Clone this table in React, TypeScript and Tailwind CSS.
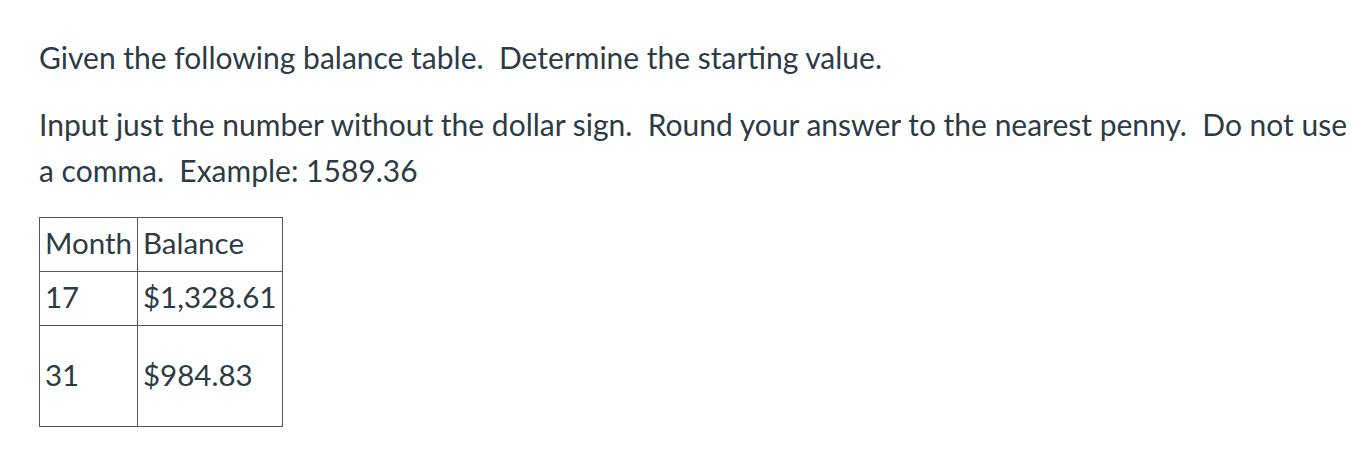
export default function App() {
  const font = { fontFamily: 'Lato, "Noto Sans", sans-serif' };
  return (
    <div className="w-[1356px] h-[455px] bg-white text-[#2d3b45] pl-[39px] pt-[34px]" style={font}>
      <p className="text-[30px] leading-[46px]">Given the following balance table.&nbsp; Determine the starting value.</p>
      <p className="text-[30px] leading-[46px] mt-[21px] w-[1317px]">
        Input just the number without the dollar sign.&nbsp; Round your answer to the nearest penny.&nbsp; Do not use a comma.&nbsp; Example: 1589.36
      </p>
      <table className="mt-[24px] table-fixed w-[244px] border-collapse border border-[#555] text-[29.5px] leading-[32px]">
        <tbody>
          <tr className="h-[54px]">
            <td className="border border-[#555] w-[98px] pl-[5px] pr-0 pb-[3px] align-middle whitespace-nowrap">Month</td>
            <td className="border border-[#555] pl-[5px] pr-0 pb-[3px] align-middle whitespace-nowrap">Balance</td>
          </tr>
          <tr className="h-[54px]">
            <td className="border border-[#555] pl-[5px] pb-[3px] align-middle">17</td>
            <td className="border border-[#555] pl-[5px] pb-[3px] align-middle whitespace-nowrap">$1,328.61</td>
          </tr>
          <tr className="h-[101px]">
            <td className="border border-[#555] pl-[5px] pb-[3px] align-middle">31</td>
            <td className="border border-[#555] pl-[5px] pb-[3px] align-middle">$984.83</td>
          </tr>
        </tbody>
      </table>
    </div>
  );
}
